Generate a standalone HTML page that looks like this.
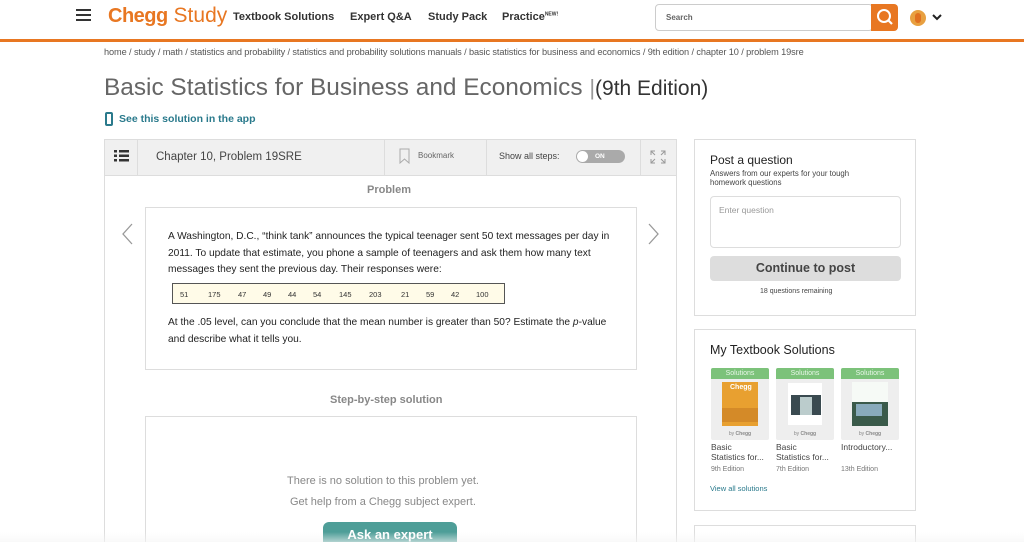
<!DOCTYPE html>
<html style="overflow:hidden;height:542px"><head><meta charset="utf-8"><style>
*{margin:0;padding:0;box-sizing:border-box}
body{width:1024px;height:542px;overflow:hidden;background:#fff;font-family:"Liberation Sans",sans-serif;position:relative;color:#333}
.a{position:absolute;white-space:nowrap}
.nav{font-weight:bold;font-size:11px;color:#333;top:11px}
.box{position:absolute;border:1px solid #ddd;background:#fff}
.bk{position:absolute;top:368px;width:58px;height:72px;background:#eee;border-radius:2px}
.bk .s{height:11px;background:#7cc27a;color:#e8f6e8;font-size:7px;text-align:center;line-height:11px;border-radius:2px 2px 0 0}
.bk .c{position:absolute;left:11px;top:14px;width:36px;height:44px}
.bk .by{position:absolute;bottom:3px;width:100%;text-align:center;font-size:5px;color:#888}
.bt{position:absolute;top:442px;font-size:8.5px;color:#444;line-height:10px}
.ed{position:absolute;top:466px;font-size:7px;color:#777}
.n span{display:inline-block}
</style></head><body>
<div class="a" style="left:76px;top:9px;width:15px;height:2px;background:#333;box-shadow:0 5px 0 #333,0 10px 0 #333"></div>
<div class="a" style="left:108px;top:4px;font-size:20px;font-weight:bold;color:#e87722;letter-spacing:-0.5px">Chegg<span style="font-weight:normal;font-size:21px;letter-spacing:0"> Study</span></div>
<div class="a nav" style="left:233px">Textbook Solutions</div>
<div class="a nav" style="left:350px">Expert Q&amp;A</div>
<div class="a nav" style="left:428px">Study Pack</div>
<div class="a nav" style="left:502px">Practice<sup style="font-size:5px">NEW!</sup></div>
<div class="a" style="left:655px;top:4px;width:218px;height:27px;border:1px solid #ccc;border-radius:4px;font-size:8px;font-weight:bold;color:#666;padding:8px 10px">Search</div>
<div class="a" style="left:871px;top:4px;width:27px;height:27px;background:#e87722;border-radius:0 4px 4px 0"><svg width="27" height="27"><circle cx="13" cy="12" r="6" fill="none" stroke="#fff" stroke-width="2"/><path d="M17 16l4 4" stroke="#fff" stroke-width="2.2"/></svg></div>
<div class="a" style="left:910px;top:10px;width:16px;height:16px;border-radius:50%;background:#e8a040"><div style="position:absolute;left:5px;top:3px;width:6px;height:10px;background:#e07020;border-radius:3px"></div></div>
<svg class="a" style="left:931px;top:12px" width="12" height="10"><path d="M2 3l4 4 4-4" stroke="#222" stroke-width="2" fill="none"/></svg>
<div class="a" style="left:0;top:39px;width:1024px;height:3px;background:#e87722"></div>
<div class="a" style="left:104px;top:47px;font-size:9.2px;color:#555;letter-spacing:-0.1px">home / study / math / statistics and probability / statistics and probability solutions manuals / basic statistics for business and economics / 9th edition / chapter 10 / problem 19sre</div>
<div class="a" style="left:104px;top:74px;font-size:24.4px;color:#666">Basic Statistics for Business and Economics <span style="color:#999;font-size:22px">|</span><span style="font-size:21px;color:#333">(9th Edition)</span></div>
<div class="a" style="left:105px;top:112px;width:8px;height:14px;border:2px solid #2a7a8c;border-radius:2px"></div>
<div class="a" style="left:119px;top:113px;font-size:10.5px;font-weight:bold;color:#2a7a8c">See this solution in the app</div>
<div class="box" style="left:104px;top:139px;width:573px;height:420px"></div>
<div class="a" style="left:105px;top:140px;width:571px;height:36px;background:#f0f0f0;border-bottom:1px solid #ddd"></div>
<div class="a" style="left:137px;top:140px;width:1px;height:36px;background:#ddd"></div>
<div class="a" style="left:384px;top:140px;width:1px;height:36px;background:#ddd"></div>
<div class="a" style="left:486px;top:140px;width:1px;height:36px;background:#ddd"></div>
<div class="a" style="left:640px;top:140px;width:1px;height:36px;background:#ddd"></div>
<svg class="a" style="left:114px;top:149px" width="16" height="14"><g fill="#333"><rect x="0" y="1" width="3" height="2.5"/><rect x="0" y="5.5" width="3" height="2.5"/><rect x="0" y="10" width="3" height="2.5"/><rect x="5" y="1" width="10" height="2.5"/><rect x="5" y="5.5" width="10" height="2.5"/><rect x="5" y="10" width="10" height="2.5"/></g></svg>
<div class="a" style="left:156px;top:151px;font-size:11.5px;color:#444">Chapter 10, Problem 19SRE</div>
<svg class="a" style="left:399px;top:148px" width="12" height="16"><path d="M1 1h9v14l-4.5-4L1 15z" fill="none" stroke="#aaa"/></svg>
<div class="a" style="left:418px;top:151px;font-size:8px;color:#666">Bookmark</div>
<div class="a" style="left:499px;top:151px;font-size:9px;color:#444">Show all steps:</div>
<div class="a" style="left:576px;top:150px;width:49px;height:13px;border-radius:7px;background:#aaa"><div style="position:absolute;left:1px;top:1px;width:11px;height:11px;border-radius:50%;background:#fff"></div><div style="position:absolute;left:19px;top:3px;font-size:6.5px;line-height:7px;font-weight:bold;color:#fff">ON</div></div>
<svg class="a" style="left:650px;top:150px" width="16" height="14"><g stroke="#999" fill="none" stroke-width="1"><path d="M1 5V1h4M1 1l4 4M15 5V1h-4M15 1l-4 4M1 9v4h4M1 13l4-4M15 9v4h-4M15 13l-4-4"/></g></svg>
<div class="a" style="left:367px;top:184px;font-size:11px;font-weight:bold;color:#888">Problem</div>
<svg class="a" style="left:121px;top:222px" width="14" height="24"><path d="M11 2L2 12l9 10" stroke="#999" fill="none" stroke-width="1.3"/></svg>
<svg class="a" style="left:646px;top:222px" width="14" height="24"><path d="M3 2l9 10-9 10" stroke="#999" fill="none" stroke-width="1.3"/></svg>
<div class="box" style="left:145px;top:207px;width:492px;height:163px"></div>
<div class="a" style="left:168px;top:229px;font-size:10.2px;line-height:16.5px;color:#222;white-space:normal;width:452px">A Washington, D.C., “think tank” announces the typical teenager sent 50 text messages per day in 2011. To update that estimate, you phone a sample of teenagers and ask them how many text messages they sent the previous day. Their responses were:</div>
<div class="a n" style="left:172px;top:283px;width:333px;height:21px;background:#fffbe8;border:1px solid #555;font-size:7.5px;color:#333;padding:6px 0 0 7px">
<span style="width:28px">51</span><span style="width:30px">175</span><span style="width:25px">47</span><span style="width:25px">49</span><span style="width:25px">44</span><span style="width:26px">54</span><span style="width:30px">145</span><span style="width:32px">203</span><span style="width:25px">21</span><span style="width:25px">59</span><span style="width:25px">42</span><span>100</span></div>
<div class="a" style="left:168px;top:315px;font-size:10.2px;line-height:16.5px;color:#222;white-space:normal;width:440px">At the .05 level, can you conclude that the mean number is greater than 50? Estimate the <i>p</i>-value and describe what it tells you.</div>
<div class="a" style="left:330px;top:394px;font-size:11px;font-weight:bold;color:#888">Step-by-step solution</div>
<div class="box" style="left:145px;top:416px;width:492px;height:150px"></div>
<div class="a" style="left:287px;top:475px;font-size:11px;color:#888">There is no solution to this problem yet.</div>
<div class="a" style="left:290px;top:496px;font-size:11px;color:#888">Get help from a Chegg subject expert.</div>
<div class="a" style="left:323px;top:522px;width:134px;height:26px;background:#4e9e98;border-radius:6px;color:#fff;font-size:13px;font-weight:bold;text-align:center;padding-top:5px">Ask an expert</div>
<div class="box" style="left:694px;top:139px;width:222px;height:177px"></div>
<div class="a" style="left:710px;top:153px;font-size:12px;color:#222">Post a question</div>
<div class="a" style="left:710px;top:170px;font-size:7.8px;line-height:8.5px;color:#444">Answers from our experts for your tough<br>homework questions</div>
<div class="a" style="left:710px;top:196px;width:191px;height:52px;border:1px solid #ddd;border-radius:4px;font-size:8.5px;color:#999;padding:8px 8px">Enter question</div>
<div class="a" style="left:710px;top:256px;width:191px;height:25px;background:#ddd;border-radius:4px;font-size:12.5px;font-weight:bold;color:#444;text-align:center;padding-top:5px">Continue to post</div>
<div class="a" style="left:760px;top:288px;font-size:7px;color:#444">18 questions remaining</div>
<div class="box" style="left:694px;top:329px;width:222px;height:182px"></div>
<div class="a" style="left:710px;top:343px;font-size:12.5px;color:#222">My Textbook Solutions</div>
<div class="bk" style="left:711px"><div class="s">Solutions</div><div class="c" style="background:#e8a030"><div style="color:#fff;font-size:7px;font-weight:bold;padding:2px 0 0 8px">Chegg</div><div style="position:absolute;bottom:4px;left:0;width:36px;height:14px;background:#d48a28"></div></div><div class="by">by <b>Chegg</b></div></div>
<div class="bk" style="left:776px"><div class="s">Solutions</div><div class="c" style="background:#fff;border:1px solid #eee"><div style="position:absolute;left:3px;top:12px;width:30px;height:20px;background:#3a4a50"></div><div style="position:absolute;left:12px;top:14px;width:12px;height:18px;background:#bcc"></div></div><div class="by">by <b>Chegg</b></div></div>
<div class="bk" style="left:841px"><div class="s">Solutions</div><div class="c" style="background:#f6faf6"><div style="position:absolute;left:0;top:20px;width:36px;height:24px;background:#3a5a4a"></div><div style="position:absolute;left:4px;top:22px;width:26px;height:12px;background:#8ab"></div></div><div class="by">by <b>Chegg</b></div></div>
<div class="bt" style="left:711px">Basic<br>Statistics for...</div>
<div class="bt" style="left:776px">Basic<br>Statistics for...</div>
<div class="bt" style="left:841px">Introductory...</div>
<div class="ed" style="left:711px">9th Edition</div>
<div class="ed" style="left:776px">7th Edition</div>
<div class="ed" style="left:841px">13th Edition</div>
<div class="a" style="left:710px;top:484px;font-size:7.5px;color:#2a7a8c">View all solutions</div>
<div class="box" style="left:694px;top:525px;width:222px;height:40px"></div>
<div class="a" style="left:0;top:532px;width:1024px;height:10px;background:linear-gradient(rgba(255,255,255,0),rgba(245,245,245,0.6))"></div>
</body></html>
